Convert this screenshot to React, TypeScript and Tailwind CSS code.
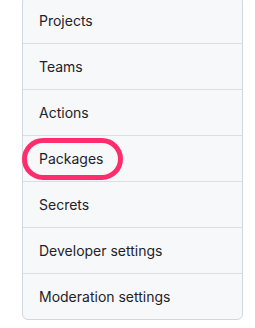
import React from 'react';

const items = [
  'Projects',
  'Teams',
  'Actions',
  'Packages',
  'Secrets',
  'Developer settings',
  'Moderation settings',
];

export default function App() {
  return (
    <div className="w-[255px] h-[328px] bg-white overflow-hidden" style={{ fontFamily: 'Inter, "Liberation Sans", Arial, sans-serif' }}>
      <div className="ml-[22px] w-[221px] -mt-[4px] bg-[#f6f8fa] border border-[#d0d7de] rounded-md">
        {items.map((label, i) => (
          <div
            key={label}
            className={
              'relative h-[46px] flex items-center pl-[16px] text-[14px] text-[#1f2328] ' +
              (i > 0 ? 'border-t border-[#d8dee4]' : '')
            }
          >
            {label === 'Packages' && (
              <div className="absolute left-[-1px] top-[2px] w-[101px] h-[42px] rounded-full border-[5px] border-[#ff2d6d]" />
            )}
            <span className="relative">{label}</span>
          </div>
        ))}
      </div>
    </div>
  );
}
